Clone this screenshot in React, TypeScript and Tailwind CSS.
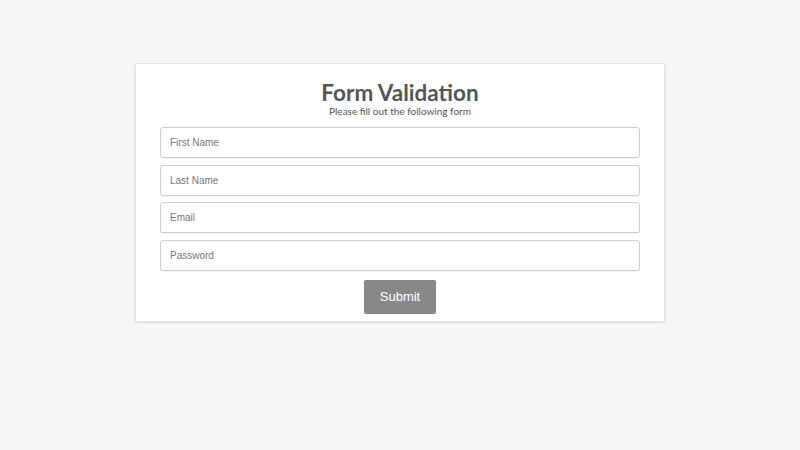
import React from "react";

export default function App() {
  const fields = ["First Name", "Last Name", "Email", "Password"];
  return (
    <div className="min-h-[450px] w-full bg-[#f6f6f6] pt-[63px]" style={{ fontFamily: "Lato, sans-serif" }}>
      <div className="mx-auto w-[530px] rounded-[2px] border border-[#e2e2e2] bg-white px-[24px] pt-[18px] pb-[7px] shadow-[0_1px_2px_rgba(0,0,0,0.12)]">
        <h1 className="text-center text-[22.5px] font-bold leading-[22px] text-[#555]">Form Validation</h1>
        <p className="text-center text-[10px] leading-[14px] text-[#555]">Please fill out the following form</p>
        <form className="mt-[9px] flex flex-col gap-[6.5px]" onSubmit={(e) => e.preventDefault()}>
          {fields.map((f) => (
            <input
              key={f}
              type={f === "Password" ? "password" : "text"}
              placeholder={f}
              className="h-[31px] w-full rounded-[3px] border border-[#ccc] bg-white px-[9px] text-[10px] text-[#555] shadow-[0_1px_1px_rgba(0,0,0,0.04)] outline-none placeholder:text-[#777]"
              style={{ fontFamily: '"Liberation Sans", Arial, sans-serif' }}
            />
          ))}
          <div className="mt-[3px] flex justify-center">
            <button
              type="submit"
              className="h-[34px] w-[72px] rounded-[2px] bg-[#888] text-[13px] text-white"
              style={{ fontFamily: '"Liberation Sans", Arial, sans-serif' }}
            >
              Submit
            </button>
          </div>
        </form>
      </div>
    </div>
  );
}
